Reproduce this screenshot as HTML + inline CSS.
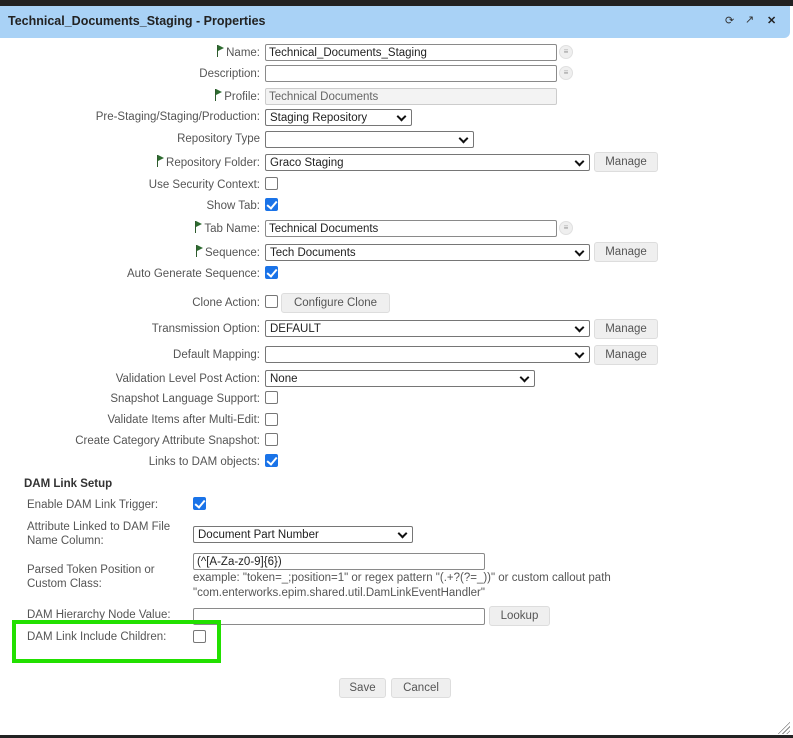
<!DOCTYPE html>
<html><head><meta charset="utf-8"><style>
*{box-sizing:border-box;margin:0;padding:0}
body{width:793px;height:738px;background:#fff;position:relative;overflow:hidden;font-family:"Liberation Sans",sans-serif;font-size:11.5px;color:#555}
.a{position:absolute}
.lbl{position:absolute;right:533px;white-space:nowrap;line-height:14px}
.inp{position:absolute;height:17px;border:1px solid #8a8a8a;border-radius:2px;background:#fff;font-size:11.5px;color:#222;padding:1px 0 0 3px;line-height:14px;white-space:nowrap}
.sel{position:absolute;height:17px;border:1px solid #767676;border-radius:2px;background:#fff;color:#222;padding:1px 0 0 4px;line-height:14px;white-space:nowrap}
.sel:after{content:"";position:absolute;right:6px;top:3px;width:5px;height:5px;border-right:2px solid #111;border-bottom:2px solid #111;transform:rotate(45deg)}
.btn{position:absolute;height:20px;background:#efefef;border:1px solid #ddd;border-radius:3px;color:#555;text-align:center;line-height:18px}
.cb{position:absolute;width:13px;height:13px;border:1px solid #777;border-radius:2px;background:#fff}
.cb.on{background:#1a73e8;border-color:#1a73e8}
.cb.on:after{content:"";position:absolute;left:3px;top:0px;width:4px;height:8px;border-right:2px solid #fff;border-bottom:2px solid #fff;transform:rotate(40deg)}
.flag{display:inline-block;width:9px;height:12px;position:relative;vertical-align:-1px}
.flag:before{content:"";position:absolute;left:0;top:0;width:1px;height:12px;background:#2d5a2d}
.flag:after{content:"";position:absolute;left:1px;top:0;border-left:6px solid #2e6b30;border-top:3px solid transparent;border-bottom:3px solid transparent}
.ic{position:absolute;width:14px;height:14px;border-radius:50%;background:#efefef;border:1px solid #e0e0e0;font-size:8px;line-height:12px;text-align:center;color:#999}
</style></head><body>
<div class="a" style="left:0;top:0;width:793px;height:6px;background:#222"></div>
<div class="a" style="left:0;top:6px;width:790px;height:32px;background:#a9d2f6;border-radius:0 0 6px 0"></div>
<div class="a" style="left:8px;top:14px;font-weight:bold;font-size:12.5px;color:#222">Technical_Documents_Staging - Properties</div>
<div class="a" style="left:725px;top:14px;font-size:11px;color:#333">&#x27F3;</div>
<div class="a" style="left:745px;top:13px;font-size:11px;color:#333">&#x2197;</div>
<div class="a" style="left:767px;top:14px;font-size:11px;font-weight:bold;color:#222">✕</div>

<div class="lbl" style="top:45px"><span class="flag"></span>Name:</div>
<div class="inp" style="left:265px;top:44px;width:292px">Technical_Documents_Staging</div><div class="ic" style="left:559px;top:45px">≡</div>
<div class="lbl" style="top:67px">Description:</div>
<div class="inp" style="left:265px;top:65px;width:292px"></div><div class="ic" style="left:559px;top:66px">≡</div>
<div class="lbl" style="top:89px"><span class="flag"></span>Profile:</div>
<div class="inp" style="left:265px;top:88px;width:292px;background:#f3f3f3;border-color:#ccc;color:#666">Technical Documents</div>
<div class="lbl" style="top:110px">Pre-Staging/Staging/Production:</div>
<div class="sel" style="left:265px;top:109px;width:147px">Staging Repository</div>
<div class="lbl" style="top:132px">Repository Type</div>
<div class="sel" style="left:265px;top:131px;width:209px"></div>
<div class="lbl" style="top:155px"><span class="flag"></span>Repository Folder:</div>
<div class="sel" style="left:265px;top:154px;width:325px">Graco Staging</div>
<div class="btn" style="left:594px;top:152px;width:64px">Manage</div>
<div class="lbl" style="top:178px">Use Security Context:</div><div class="cb" style="left:265px;top:177px"></div>
<div class="lbl" style="top:199px">Show Tab:</div><div class="cb on" style="left:265px;top:198px"></div>
<div class="lbl" style="top:221px"><span class="flag"></span>Tab Name:</div>
<div class="inp" style="left:265px;top:220px;width:292px">Technical Documents</div><div class="ic" style="left:559px;top:221px">≡</div>
<div class="lbl" style="top:245px"><span class="flag"></span>Sequence:</div>
<div class="sel" style="left:265px;top:244px;width:325px">Tech Documents</div>
<div class="btn" style="left:594px;top:242px;width:64px">Manage</div>
<div class="lbl" style="top:267px">Auto Generate Sequence:</div><div class="cb on" style="left:265px;top:266px"></div>
<div class="lbl" style="top:296px">Clone Action:</div><div class="cb" style="left:265px;top:295px"></div>
<div class="btn" style="left:281px;top:293px;width:109px">Configure Clone</div>
<div class="lbl" style="top:322px">Transmission Option:</div>
<div class="sel" style="left:265px;top:320px;width:325px">DEFAULT</div>
<div class="btn" style="left:594px;top:319px;width:64px">Manage</div>
<div class="lbl" style="top:348px">Default Mapping:</div>
<div class="sel" style="left:265px;top:346px;width:325px"></div>
<div class="btn" style="left:594px;top:345px;width:64px">Manage</div>
<div class="lbl" style="top:372px">Validation Level Post Action:</div>
<div class="sel" style="left:265px;top:370px;width:270px">None</div>
<div class="lbl" style="top:392px">Snapshot Language Support:</div><div class="cb" style="left:265px;top:391px"></div>
<div class="lbl" style="top:413px">Validate Items after Multi-Edit:</div><div class="cb" style="left:265px;top:413px"></div>
<div class="lbl" style="top:434px">Create Category Attribute Snapshot:</div><div class="cb" style="left:265px;top:433px"></div>
<div class="lbl" style="top:455px">Links to DAM objects:</div><div class="cb on" style="left:265px;top:454px"></div>

<div class="a" style="left:24px;top:478px;font-weight:bold;color:#333">DAM Link Setup</div>
<div class="a" style="left:27px;top:499px">Enable DAM Link Trigger:</div><div class="cb on" style="left:193px;top:497px"></div>
<div class="a" style="left:27px;top:520px;line-height:14px">Attribute Linked to DAM File<br>Name Column:</div>
<div class="sel" style="left:193px;top:526px;width:220px">Document Part Number</div>
<div class="a" style="left:27px;top:563px;line-height:14px">Parsed Token Position or<br>Custom Class:</div>
<div class="inp" style="left:193px;top:553px;width:292px">(^[A-Za-z0-9]{6})</div>
<div class="a" style="left:193px;top:571px;line-height:15px;white-space:nowrap">example: "token=_;position=1" or regex pattern "(.+?(?=_))" or custom callout path<br>"com.enterworks.epim.shared.util.DamLinkEventHandler"</div>
<div class="a" style="left:27px;top:609px">DAM Hierarchy Node Value:</div>
<div class="inp" style="left:193px;top:608px;width:292px"></div>
<div class="btn" style="left:489px;top:606px;width:61px">Lookup</div>
<div class="a" style="left:27px;top:631px">DAM Link Include Children:</div><div class="cb" style="left:193px;top:630px"></div>
<div class="a" style="left:12px;top:620px;width:209px;height:43px;border:4px solid #22e000"></div>

<div class="btn" style="left:339px;top:678px;width:47px">Save</div>
<div class="btn" style="left:391px;top:678px;width:60px">Cancel</div>
<div class="a" style="left:776px;top:720px;width:14px;height:14px;background:repeating-linear-gradient(135deg,transparent 0 2px,#888 2px 3px);clip-path:polygon(100% 0,100% 100%,0 100%)"></div>
<div class="a" style="left:0;top:735px;width:793px;height:3px;background:#222"></div>
</body></html>
